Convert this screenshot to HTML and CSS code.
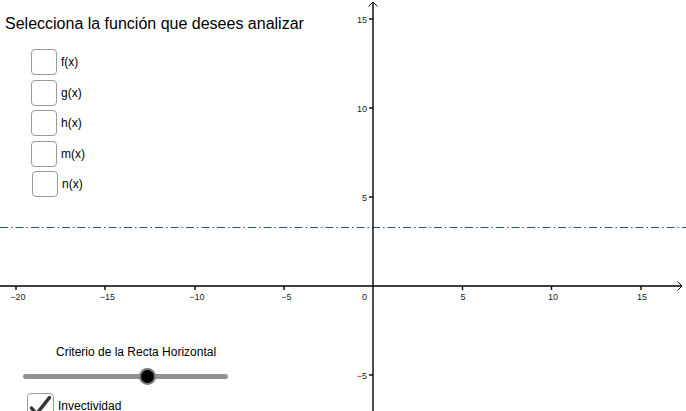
FILE: index.html
```html
<!DOCTYPE html>
<html lang="es">
<head>
<meta charset="utf-8">
<title>Criterio de la Recta Horizontal</title>
<link rel="stylesheet" href="styles.css">
</head>
<body>
<div class="app">
  <svg class="plot" width="686" height="411" viewBox="0 0 686 411" xmlns="http://www.w3.org/2000/svg">
    <line class="dash" x1="0" y1="227.5" x2="686" y2="227.5"/>
    <g class="axis">
      <line x1="0" y1="286" x2="682" y2="286"/>
      <polyline points="677.5,281.5 682,286 677.5,290.5"/>
      <line x1="373" y1="411" x2="373" y2="2"/>
      <polyline points="368.5,6.5 373,2 377.5,6.5"/>
      <line x1="16" y1="286" x2="16" y2="290"/>
      <line x1="105" y1="286" x2="105" y2="290"/>
      <line x1="195" y1="286" x2="195" y2="290"/>
      <line x1="284" y1="286" x2="284" y2="290"/>
      <line x1="462.5" y1="286" x2="462.5" y2="290"/>
      <line x1="551.5" y1="286" x2="551.5" y2="290"/>
      <line x1="641" y1="286" x2="641" y2="290"/>
      <line x1="369" y1="19" x2="373" y2="19"/>
      <line x1="369" y1="108" x2="373" y2="108"/>
      <line x1="369" y1="197" x2="373" y2="197"/>
      <line x1="369" y1="375" x2="373" y2="375"/>
    </g>
    <g class="ticklabels xl">
      <text x="18" y="299.5">−20</text>
      <text x="107.5" y="299.5">−15</text>
      <text x="197" y="299.5">−10</text>
      <text x="286.5" y="299.5">−5</text>
      <text x="364.5" y="299.5">0</text>
      <text x="463" y="299.5">5</text>
      <text x="553" y="299.5">10</text>
      <text x="642" y="299.5">15</text>
    </g>
    <g class="ticklabels yl">
      <text x="367" y="22.5">15</text>
      <text x="367" y="111.5">10</text>
      <text x="367" y="200.5">5</text>
      <text x="367" y="378.5">−5</text>
    </g>
  </svg>

  <div class="panel">
    <h1 class="title">Selecciona la función que desees analizar</h1>
    <ul class="checks">
      <li class="check"><span class="box"></span><span class="lbl">f(x)</span></li>
      <li class="check"><span class="box"></span><span class="lbl">g(x)</span></li>
      <li class="check"><span class="box"></span><span class="lbl">h(x)</span></li>
      <li class="check"><span class="box"></span><span class="lbl">m(x)</span></li>
      <li class="check check-shift"><span class="box"></span><span class="lbl">n(x)</span></li>
    </ul>
  </div>

  <div class="lower">
    <div class="slider-label">Criterio de la Recta Horizontal</div>
    <div class="slider">
      <div class="track"></div>
      <div class="knob"></div>
    </div>
    <div class="check check-on">
      <span class="box">
        <svg width="27" height="27" viewBox="0 0 27 27"><polyline points="4.5,15 9.5,21 22.5,4.5"/></svg>
      </span>
      <span class="lbl">Invectividad</span>
    </div>
  </div>
</div>
</body>
</html>
```

FILE: styles.css
```css
html, body {
  margin: 0;
  padding: 0;
  background: #ffffff;
}

.app {
  position: relative;
  width: 686px;
  height: 411px;
  overflow: hidden;
  font-family: "Liberation Sans", Arial, sans-serif;
  color: #000;
}

.plot {
  position: absolute;
  left: 0;
  top: 0;
}

.dash {
  stroke: #1d5a8a;
  stroke-width: 1;
  stroke-dasharray: 8 3 1.5 3;
}

.axis line,
.axis polyline {
  stroke: #000;
  stroke-width: 1.4;
  fill: none;
}

.axis polyline {
  stroke-width: 1;
}

.ticklabels text {
  font-family: "Liberation Sans", Arial, sans-serif;
  font-size: 9px;
  fill: #222;
}

.xl text {
  text-anchor: middle;
}

.yl text {
  text-anchor: end;
}

.panel {
  position: absolute;
  left: 0;
  top: 0;
  display: flex;
  flex-direction: column;
}

.title {
  margin: 14px 0 0 5px;
  font-size: 16px;
  line-height: 20px;
  font-weight: normal;
  white-space: nowrap;
}

.checks {
  list-style: none;
  margin: 15px 0 0 0;
  padding: 0 0 0 31px;
  display: flex;
  flex-direction: column;
  gap: 4.5px;
}

.check {
  display: flex;
  align-items: center;
  gap: 4px;
  font-size: 12px;
  line-height: 14px;
}

.check-shift {
  padding-left: 1px;
}

.box {
  box-sizing: border-box;
  width: 26px;
  height: 26px;
  border: 1.5px solid #9b9b9b;
  border-radius: 4px;
  background: #fff;
  flex: none;
  display: flex;
}

.lower {
  position: absolute;
  left: 23px;
  top: 345px;
  display: flex;
  flex-direction: column;
}

.slider-label {
  font-size: 12px;
  line-height: 14px;
  padding-left: 33px;
  white-space: nowrap;
}

.slider {
  position: relative;
  width: 205px;
  height: 17px;
  margin-top: 9px;
  display: flex;
  align-items: center;
}

.track {
  width: 100%;
  height: 5px;
  border-radius: 3px;
  background: #929292;
}

.knob {
  position: absolute;
  left: 116px;
  top: 0;
  box-sizing: border-box;
  width: 17px;
  height: 17px;
  border-radius: 50%;
  background: #000;
  border: 2.5px solid #7a7a7a;
}

.check-on {
  margin-top: 8px;
  padding-left: 4px;
}

.check-on .box {
  width: 27px;
  height: 27px;
  position: relative;
}

.check-on .box svg {
  position: absolute;
  left: -1.5px;
  top: -1.5px;
}

.check-on polyline {
  fill: none;
  stroke: #333;
  stroke-width: 3.5;
  stroke-linecap: round;
  stroke-linejoin: round;
}

.check-on .lbl {
  align-self: flex-start;
  margin-top: 6px;
}
```
